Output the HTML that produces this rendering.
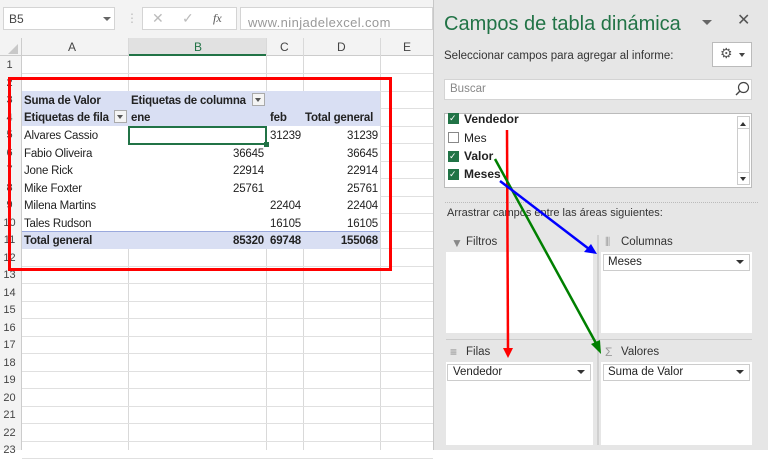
<!DOCTYPE html><html><head><style>
*{box-sizing:border-box;margin:0;padding:0}
body{width:768px;height:450px;overflow:hidden;background:#fff;font-family:"Liberation Sans",sans-serif;position:relative;font-size:12px;color:#222}
.a{position:absolute}
.t{position:absolute;white-space:nowrap;font-size:12px;line-height:17px}
.s{font-size:11.5px;letter-spacing:-0.2px}
.b{font-weight:bold}
.r{text-align:right}
</style></head><body>
<div class="a" style="left:0;top:0;width:433px;height:38px;background:#f3f3f3"></div>
<div class="a" style="left:3px;top:7px;width:112px;height:23px;background:#fff;border:1px solid #d4d4d4"></div>
<div class="t" style="left:9px;top:11px;color:#444">B5</div>
<div class="a" style="left:103px;top:17px;border:4px solid transparent;border-top:4px solid #666"></div>
<div class="t" style="left:126px;top:10px;color:#bbb">⋮</div>
<div class="a" style="left:142px;top:7px;width:95px;height:23px;background:#fff;border:1px solid #d4d4d4"></div>
<div class="t" style="left:152px;top:10px;color:#bbb;font-size:14px">✕</div>
<div class="t" style="left:182px;top:10px;color:#bbb;font-size:14px">✓</div>
<div class="t" style="left:213px;top:10px;color:#555;font-style:italic;font-family:'Liberation Serif',serif">fx</div>
<div class="a" style="left:240px;top:7px;width:193px;height:23px;background:#fff;border:1px solid #d4d4d4"></div>
<div class="t" style="left:248px;top:14px;color:#999;font-size:13px;letter-spacing:0.4px">www.ninjadelexcel.com</div>
<div class="a" style="left:0;top:38px;width:433px;height:18px;background:#f3f3f3;border-bottom:1px solid #ccc"></div>
<div class="a" style="left:129px;top:38px;width:137px;height:18px;background:#e1e1e1;border-bottom:2px solid #217346"></div>
<div class="t" style="left:68px;top:39px;color:#444">A</div>
<div class="t" style="left:194px;top:39px;color:#217346">B</div>
<div class="t" style="left:280px;top:39px;color:#444">C</div>
<div class="t" style="left:337px;top:39px;color:#444">D</div>
<div class="t" style="left:403px;top:39px;color:#444">E</div>
<svg class="a" style="left:0;top:38px" width="433" height="412">
<polygon points="8,16 18,16 18,6" fill="#c8c8c8"/>
<g stroke="#d9d9d9" stroke-width="1">
<line x1="128.5" y1="0" x2="128.5" y2="412"/><line x1="266.5" y1="0" x2="266.5" y2="412"/><line x1="303.5" y1="0" x2="303.5" y2="412"/><line x1="380.5" y1="0" x2="380.5" y2="412"/>
</g>
<rect x="0" y="18" width="21" height="394" fill="#f3f3f3"/>
<line x1="21.5" y1="0" x2="21.5" y2="412" stroke="#ccc"/>
</svg>
<div id="rows"></div>
<div class="a" style="left:22px;top:91px;width:358px;height:35px;background:#d9dff3"></div>
<div class="a" style="left:22px;top:231px;width:358px;height:18px;background:#d9dff3;border-top:1px solid #9aa9dd"></div>
<div class="a" style="left:22px;top:126px;width:358px;height:105px;background:#fff"></div>
<div class="t b s" style="left:24px;top:93px">Suma de Valor</div>
<div class="t b s" style="left:131px;top:93px">Etiquetas de columna</div>
<div class="a" style="left:252px;top:93px;width:13px;height:13px;background:#f4f4f4;border:1px solid #aaa"></div>
<div class="a" style="left:255px;top:98px;border:3px solid transparent;border-top:4px solid #555"></div>
<div class="t b s" style="left:24px;top:110px">Etiquetas de fila</div>
<div class="a" style="left:114px;top:110px;width:13px;height:13px;background:#f4f4f4;border:1px solid #aaa"></div>
<div class="a" style="left:117px;top:115px;border:3px solid transparent;border-top:4px solid #555"></div>
<div class="t b s" style="left:131px;top:110px">ene</div>
<div class="t b s" style="left:270px;top:110px">feb</div>
<div class="t b s" style="left:305px;top:110px">Total general</div>
<div class="a" style="left:128px;top:126px;width:139px;height:19px;border:2px solid #217346"></div>
<div class="a" style="left:264px;top:142px;width:5px;height:5px;background:#217346"></div>
<div id="data"></div>
<div class="a" style="left:8px;top:77px;width:384px;height:194px;border:3px solid #f00"></div>
<div class="a" style="left:433px;top:0;width:335px;height:450px;background:#e6e6e6;border-left:1px solid #c8c8c8"></div>
<div class="t" style="left:444px;top:12px;font-size:20px;line-height:24px;color:#217346">Campos de tabla dinámica</div>
<div class="a" style="left:702px;top:20px;border:5px solid transparent;border-top:5px solid #666"></div>
<div class="t" style="left:737px;top:12px;font-size:16px;color:#555">✕</div>
<div class="t" style="left:444px;top:48px;color:#333;font-size:11.5px">Seleccionar campos para agregar al informe:</div>
<div class="a" style="left:712px;top:42px;width:40px;height:25px;background:#fff;border:1px solid #bbb"></div>
<div class="t" style="left:720px;top:45px;font-size:14px;color:#555">⚙</div>
<div class="a" style="left:739px;top:53px;border:3px solid transparent;border-top:4px solid #444"></div>
<div class="a" style="left:444px;top:79px;width:308px;height:21px;background:#fff;border:1px solid #d4d4d4"></div>
<div class="t" style="left:450px;top:81px;color:#888;font-size:11.5px">Buscar</div>
<svg class="a" style="left:734px;top:81px" width="16" height="16"><circle cx="9.5" cy="6.5" r="5" fill="none" stroke="#444" stroke-width="1.2"/><line x1="6" y1="10" x2="2" y2="14" stroke="#444" stroke-width="1.4"/></svg>
<div class="a" style="left:444px;top:113px;width:308px;height:75px;background:#fff;border:1px solid #bbb"></div>
<div class="a" style="left:737px;top:116px;width:13px;height:69px;background:#fff;border:1px solid #ccc"></div>
<div class="a" style="left:737px;top:116px;width:13px;height:13px;border:1px solid #ccc"></div>
<div class="a" style="left:740px;top:119px;border:3px solid transparent;border-bottom:4px solid #333"></div>
<div class="a" style="left:737px;top:172px;width:13px;height:13px;border:1px solid #ccc"></div>
<div class="a" style="left:740px;top:177px;border:3px solid transparent;border-top:4px solid #333"></div>
<div class="a" style="left:448px;top:113px;width:11px;height:11px;background:#217346"></div>
<div class="t" style="left:449px;top:110px;color:#fff;font-size:9px">✓</div>
<div class="t b" style="left:464px;top:111px">Vendedor</div>
<div class="a" style="left:448px;top:132px;width:11px;height:11px;background:#fff;border:1px solid #888"></div>
<div class="t" style="left:464px;top:130px">Mes</div>
<div class="a" style="left:448px;top:151px;width:11px;height:11px;background:#217346"></div>
<div class="t" style="left:449px;top:148px;color:#fff;font-size:9px">✓</div>
<div class="t b" style="left:464px;top:148px">Valor</div>
<div class="a" style="left:448px;top:169px;width:11px;height:11px;background:#217346"></div>
<div class="t" style="left:449px;top:166px;color:#fff;font-size:9px">✓</div>
<div class="t b" style="left:464px;top:166px">Meses</div>
<div class="a" style="left:445px;top:202px;width:313px;border-top:1px dotted #bbb"></div>
<div class="t" style="left:447px;top:205px;font-size:11px;color:#333">Arrastrar campos entre las áreas siguientes:</div>
<div class="t" style="left:451px;top:235px;color:#888">▼</div>
<div class="t" style="left:466px;top:234px;color:#333;font-size:11.5px">Filtros</div>
<div class="t" style="left:605px;top:234px;color:#999">⦀</div>
<div class="t" style="left:621px;top:234px;color:#333;font-size:11.5px">Columnas</div>
<div class="a" style="left:446px;top:252px;width:147px;height:81px;background:#fff"></div>
<div class="a" style="left:601px;top:252px;width:151px;height:81px;background:#fff"></div>
<div class="a" style="left:597px;top:235px;width:2px;height:210px;background:#d0d0d0"></div>
<div class="a" style="left:446px;top:339px;width:306px;height:1px;background:#ccc"></div>
<div class="a" style="left:603px;top:254px;width:147px;height:17px;border:1px solid #ccc"></div>
<div class="t" style="left:608px;top:254px;font-size:11.5px">Meses</div>
<div class="a" style="left:736px;top:260px;border:4px solid transparent;border-top:4px solid #333"></div>
<div class="t" style="left:450px;top:344px;color:#888">≡</div>
<div class="t" style="left:466px;top:344px;color:#333;font-size:11.5px">Filas</div>
<div class="t" style="left:605px;top:344px;color:#999">Σ</div>
<div class="t" style="left:621px;top:344px;color:#333;font-size:11.5px">Valores</div>
<div class="a" style="left:446px;top:362px;width:147px;height:83px;background:#fff"></div>
<div class="a" style="left:601px;top:362px;width:151px;height:83px;background:#fff"></div>
<div class="a" style="left:447px;top:364px;width:144px;height:17px;border:1px solid #ccc"></div>
<div class="t" style="left:453px;top:364px;font-size:11.5px">Vendedor</div>
<div class="a" style="left:577px;top:370px;border:4px solid transparent;border-top:4px solid #333"></div>
<div class="a" style="left:603px;top:364px;width:147px;height:17px;border:1px solid #ccc"></div>
<div class="t" style="left:608px;top:364px;font-size:11.5px">Suma de Valor</div>
<div class="a" style="left:736px;top:370px;border:4px solid transparent;border-top:4px solid #333"></div>
<svg class="a" style="left:0;top:0" width="768" height="450">
<line x1="507" y1="130" x2="508" y2="350" stroke="#f00" stroke-width="2.5"/><polygon points="503,348 513,348 508,358" fill="#f00"/>
<line x1="495" y1="159" x2="597" y2="345" stroke="#008000" stroke-width="2.5"/><polygon points="591,344 600,340 601,354" fill="#008000"/>
<line x1="500" y1="181" x2="589" y2="249" stroke="#00f" stroke-width="2.5"/><polygon points="584,252 591,244 597,254" fill="#00f"/>
</svg>
<script>
var h='';for(var n=1;n<=23;n++){var y=56+(n-1)*17.5;h+='<div class="a" style="left:22px;top:'+(y+17)+'px;width:411px;height:1px;background:#e0e0e0"></div><div class="t" style="left:0;width:19px;text-align:center;top:'+(y+1)+'px;color:#444;font-size:11px">'+n+'</div>';}
document.getElementById('rows').innerHTML=h;
var d=[["Alvares Cassio","","31239","31239"],["Fabio Oliveira","36645","","36645"],["Jone Rick","22914","","22914"],["Mike Foxter","25761","","25761"],["Milena Martins","","22404","22404"],["Tales Rudson","","16105","16105"],["Total general","85320","69748","155068"]];
var g='';d.forEach(function(r,i){var y=128+i*17.5;var b=i==6?' b':'';g+='<div class="t s'+b+'" style="left:24px;top:'+y+'px">'+r[0]+'</div><div class="t s r'+b+'" style="left:130px;width:134px;top:'+y+'px">'+r[1]+'</div><div class="t s'+b+'" style="left:270px;top:'+y+'px">'+r[2]+'</div><div class="t s r'+b+'" style="left:305px;width:73px;top:'+y+'px">'+r[3]+'</div>';});
document.getElementById('data').innerHTML=g;
</script>
</body></html>
